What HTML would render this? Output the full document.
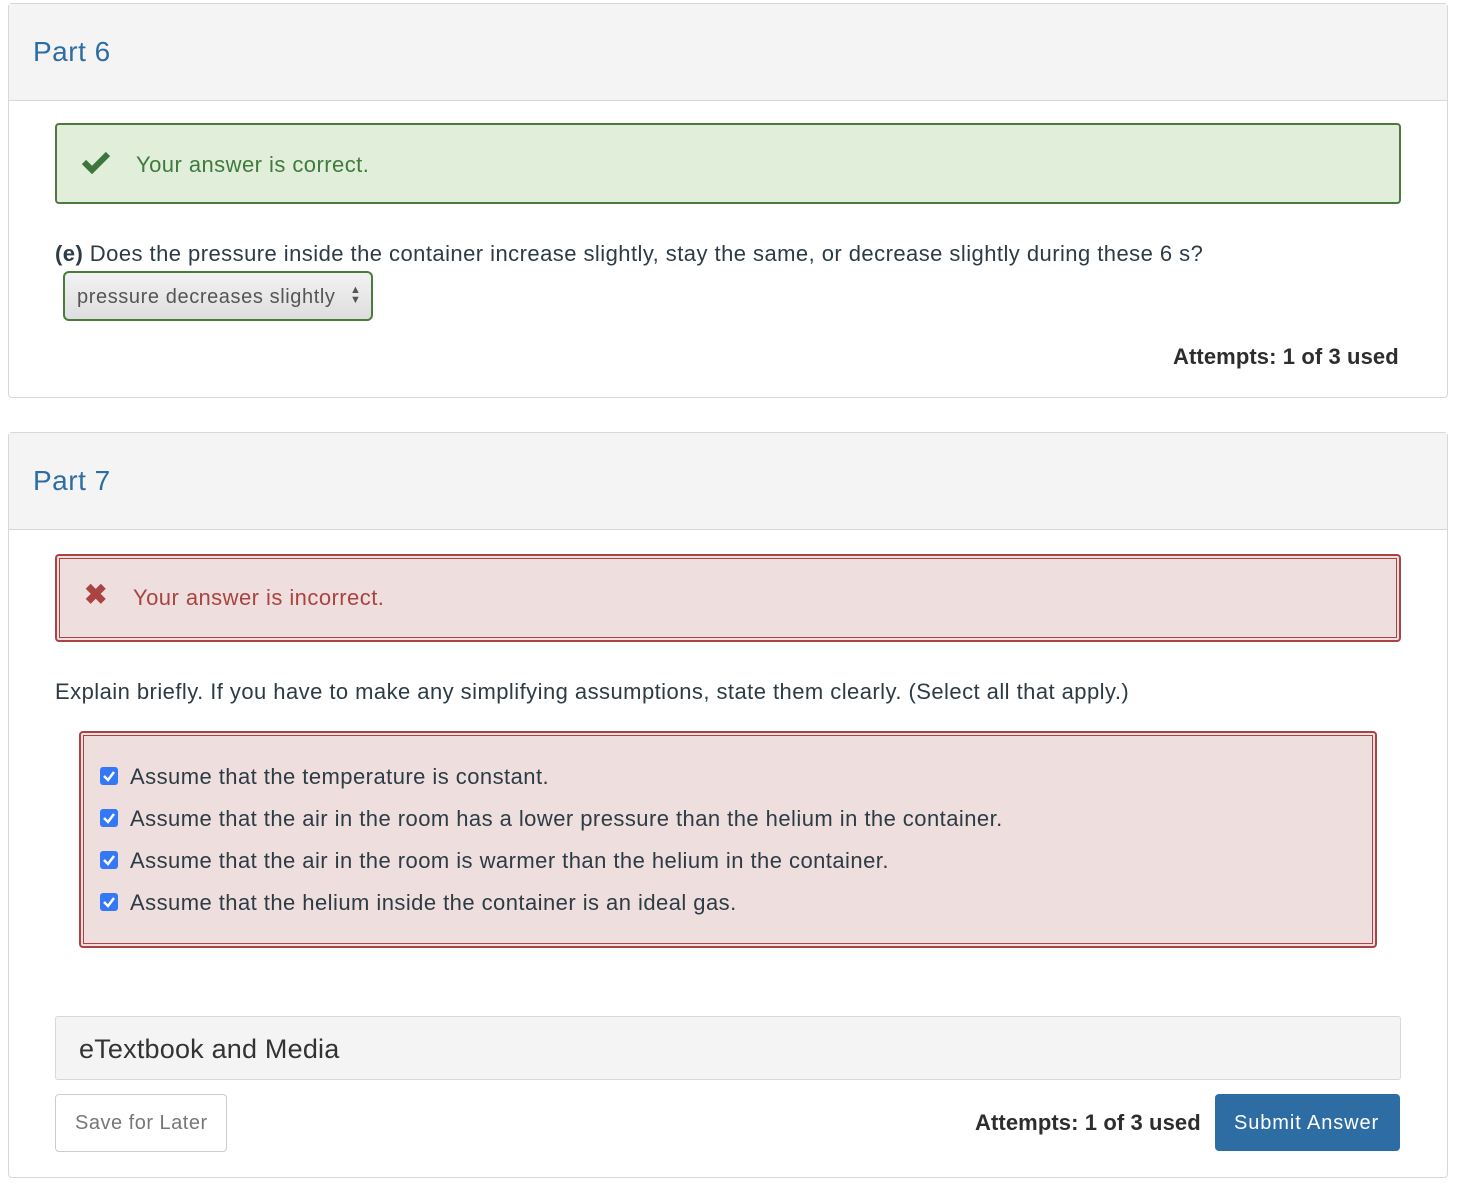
<!DOCTYPE html>
<html><head><style>
body{margin:0;background:#fff;font-family:"Liberation Sans",sans-serif;color:#2d3b45;width:1458px;height:1192px;overflow:hidden;position:relative}
.a{position:absolute}
.panel{position:absolute;left:8px;width:1438px;border:1px solid #d8d8d8;border-radius:4px;background:#fff}
.hd{background:#f4f4f4;border-bottom:1px solid #d8d8d8;height:96px;position:relative}
.hd span{position:absolute;left:24px;top:32px;font-size:28px;color:#2e6da4;letter-spacing:0.5px}
.t{font-size:22px;white-space:nowrap;letter-spacing:0.45px}
</style></head><body>
<div class="panel" style="top:3px;height:393px">
 <div class="hd"><span>Part 6</span></div>
</div>
<div class="a" style="left:55px;top:123px;width:1342px;height:77px;background:#e1eed9;border:2px solid #4b7a3d;border-radius:4px"></div>
<svg class="a" style="left:82px;top:150px" width="28" height="24" viewBox="0 0 28 24"><path d="M2 12 L10 20 L26 4" stroke="#3c763d" stroke-width="6" fill="none"/></svg>
<div class="a t" style="left:136px;top:152px;color:#3f7a3f">Your answer is correct.</div>
<div class="a t" style="left:55px;top:241px"><b>(e)</b> Does the pressure inside the container increase slightly, stay the same, or decrease slightly during these 6 s?</div>
<div class="a" style="left:63px;top:271px;width:306px;height:46px;border:2px solid #4b7a3d;border-radius:6px;background:linear-gradient(#f2f2f2,#dedede)"></div>
<div class="a t" style="left:77px;top:286px;font-size:20px;color:#555;letter-spacing:0.6px">pressure decreases slightly</div>
<div class="a" style="left:350px;top:285px;font-size:11px;line-height:10px;color:#555">▲<br>▼</div>
<div class="a t" style="left:1173px;top:344px;font-weight:bold;color:#2d2d2d;font-size:22px;letter-spacing:0.1px">Attempts: 1 of 3 used</div>

<div class="panel" style="top:432px;height:744px">
 <div class="hd"><span>Part 7</span></div>
</div>
<div class="a" style="left:55px;top:554px;width:1342px;height:84px;background:#efdede;border:2px solid #a94442;border-radius:4px"></div>
<div class="a" style="left:59px;top:558px;width:1336px;height:78px;border:1px solid #a94442"></div>
<div class="a" style="left:84px;top:578px;font-size:28px;font-weight:bold;color:#a94442">✖</div>
<div class="a t" style="left:133px;top:585px;color:#a94442">Your answer is incorrect.</div>
<div class="a t" style="left:55px;top:679px">Explain briefly. If you have to make any simplifying assumptions, state them clearly. (Select all that apply.)</div>
<div class="a" style="left:79px;top:731px;width:1294px;height:213px;background:#efdede;border:2px solid #a94442;border-radius:4px"></div>
<div class="a" style="left:83px;top:735px;width:1288px;height:207px;border:1px solid #a94442"></div>
<div class="a" style="left:100px;top:764px">
 <div style="height:42px;position:relative"><svg width="18" height="18" style="position:absolute;top:3px"><rect width="18" height="18" rx="3" fill="#3478f6"/><path d="M4 9 L8 13 L14 5" stroke="#fff" stroke-width="2.5" fill="none"/></svg><span class="t" style="position:absolute;left:30px;top:0">Assume that the temperature is constant.</span></div>
 <div style="height:42px;position:relative"><svg width="18" height="18" style="position:absolute;top:3px"><rect width="18" height="18" rx="3" fill="#3478f6"/><path d="M4 9 L8 13 L14 5" stroke="#fff" stroke-width="2.5" fill="none"/></svg><span class="t" style="position:absolute;left:30px;top:0">Assume that the air in the room has a lower pressure than the helium in the container.</span></div>
 <div style="height:42px;position:relative"><svg width="18" height="18" style="position:absolute;top:3px"><rect width="18" height="18" rx="3" fill="#3478f6"/><path d="M4 9 L8 13 L14 5" stroke="#fff" stroke-width="2.5" fill="none"/></svg><span class="t" style="position:absolute;left:30px;top:0">Assume that the air in the room is warmer than the helium in the container.</span></div>
 <div style="height:42px;position:relative"><svg width="18" height="18" style="position:absolute;top:3px"><rect width="18" height="18" rx="3" fill="#3478f6"/><path d="M4 9 L8 13 L14 5" stroke="#fff" stroke-width="2.5" fill="none"/></svg><span class="t" style="position:absolute;left:30px;top:0">Assume that the helium inside the container is an ideal gas.</span></div>
</div>
<div class="a" style="left:55px;top:1016px;width:1344px;height:62px;background:#f4f4f4;border:1px solid #d8d8d8;border-radius:3px"></div>
<div class="a t" style="left:79px;top:1034px;font-size:27px;color:#333;letter-spacing:0.2px">eTextbook and Media</div>
<div class="a" style="left:55px;top:1094px;width:170px;height:56px;border:1px solid #ccc;border-radius:4px"></div>
<div class="a t" style="left:75px;top:1112px;font-size:20px;color:#777;letter-spacing:0.5px">Save for Later</div>
<div class="a t" style="left:975px;top:1110px;font-weight:bold;color:#2d2d2d;font-size:22px;letter-spacing:0.1px">Attempts: 1 of 3 used</div>
<div class="a" style="left:1215px;top:1094px;width:185px;height:57px;background:#2e6da4;border-radius:4px"></div>
<div class="a t" style="left:1234px;top:1112px;font-size:20px;color:#fff;letter-spacing:0.9px">Submit Answer</div>
</body></html>
